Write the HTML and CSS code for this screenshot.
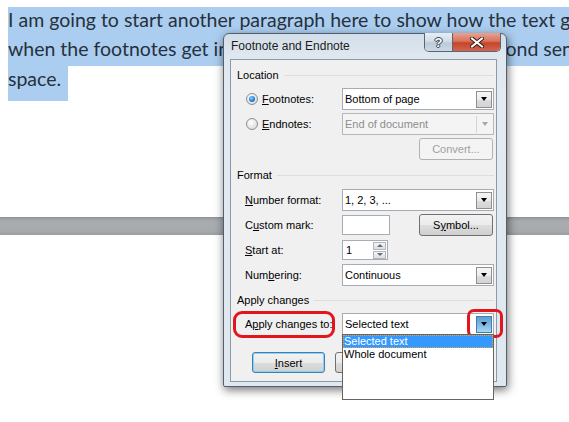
FILE: index.html
```html
<!DOCTYPE html>
<html>
<head>
<meta charset="utf-8">
<title>Footnote and Endnote</title>
<link rel="stylesheet" href="styles.css">
</head>
<body>
<div class="doc">
  <div class="line">I am going to start another paragraph here to show how the text goes</div>
  <div class="line">when the footnotes get in the way of the text. This is a second sentence to</div>
  <div class="line last">space.</div>
  <div class="page-break"></div>
</div>

<div class="dialog">
  <div class="titlebar">
    <div class="title">Footnote and Endnote</div>
    <div class="caption-btns">
      <div class="cap-btn help">?</div>
      <div class="cap-btn close">
        <svg width="14" height="11" viewBox="0 0 14 11"><path d="M2 1.5 L12 9.5 M12 1.5 L2 9.5" stroke="#3a1a14" stroke-width="4" stroke-linecap="square"/><path d="M2 1.5 L12 9.5 M12 1.5 L2 9.5" stroke="#ffffff" stroke-width="2" stroke-linecap="square"/></svg>
      </div>
    </div>
  </div>
  <div class="client">
    <div class="group-head">Location</div>
    <div class="row first">
      <div class="lbl radio-lbl"><span class="radio checked"></span><span><u>F</u>ootnotes:</span></div>
      <div class="combo"><span class="ctext">Bottom of page</span><span class="dd"><i class="tri"></i></span></div>
    </div>
    <div class="row">
      <div class="lbl radio-lbl"><span class="radio"></span><span><u>E</u>ndnotes:</span></div>
      <div class="combo disabled"><span class="ctext">End of document</span><span class="dd"><i class="tri"></i></span></div>
    </div>
    <div class="row">
      <div class="btn side disabled">Convert...</div>
    </div>

    <div class="group-head">Format</div>
    <div class="row first-f">
      <div class="lbl"><span><u>N</u>umber format:</span></div>
      <div class="combo"><span class="ctext">1, 2, 3, ...</span><span class="dd"><i class="tri"></i></span></div>
    </div>
    <div class="row">
      <div class="lbl"><span>C<u>u</u>stom mark:</span></div>
      <div class="textbox"></div>
      <div class="btn symbol">S<u>y</u>mbol...</div>
    </div>
    <div class="row">
      <div class="lbl"><span><u>S</u>tart at:</span></div>
      <div class="spin"><span class="ctext">1</span><span class="spin-btns"><span class="sb up"><i></i></span><span class="sb down"><i></i></span></span></div>
    </div>
    <div class="row">
      <div class="lbl"><span>Num<u>b</u>ering:</span></div>
      <div class="combo"><span class="ctext">Continuous</span><span class="dd"><i class="tri"></i></span></div>
    </div>

    <div class="group-head apply">Apply changes</div>
    <div class="row first-a">
      <div class="lbl"><span>A<u>p</u>ply changes to:</span></div>
      <div class="combo open"><span class="ctext">Selected text</span><span class="dd hot"><i class="tri"></i></span>
        <div class="list">
          <div class="item selected">Selected text</div>
          <div class="item">Whole document</div>
        </div>
      </div>
    </div>
    <div class="btn-row">
      <div class="btn default"><u>I</u>nsert</div>
      <div class="btn">Cancel</div>
    </div>
  </div>
</div>

<div class="mark mark-label"></div>
<div class="mark mark-arrow"></div>
</body>
</html>
```
FILE: styles.css
```css
html, body {
  margin: 0;
  padding: 0;
}
body {
  width: 569px;
  height: 422px;
  overflow: hidden;
  position: relative;
  background: #ffffff;
  font-family: Lato, "Liberation Sans", sans-serif;
}

/* document */
.doc {
  padding-top: 7px;
  padding-left: 8px;
}
.line {
  height: 29.3px;
  line-height: 25px;
  background: #abcdef;
  white-space: nowrap;
  overflow: hidden;
  font-size: 19.5px;
  color: #26313d;
}
.line.last {
  width: 60px;
  height: 35.4px;
}
.page-break {
  margin-top: 116px;
  margin-left: -8px;
  height: 18px;
  background: linear-gradient(#8c9094 0px, #9ea2a6 2px, #aaadb0 5px, #a7aaad 14px, #9a9ea1 18px);
}

/* dialog window */
.dialog {
  position: absolute;
  left: 223px;
  top: 33px;
  width: 284px;
  height: 354px;
  box-sizing: border-box;
  border: 1px solid #52606e;
  border-radius: 6px 6px 2px 2px;
  background: linear-gradient(#d3dee9 0px, #dfe7ef 22px, #e3eaf1 60px, #dfe7ef 100%);
  box-shadow: 1px 3px 10px rgba(0, 0, 0, 0.55);
  font-family: "Liberation Sans", Arial, sans-serif;
  font-size: 11px;
  color: #000;
}
.titlebar {
  height: 25px;
  display: flex;
  align-items: flex-start;
}
.title {
  padding-left: 7px;
  line-height: 24px;
  font-size: 12px;
  color: #1b1b1b;
}
.caption-btns {
  margin-left: auto;
  margin-right: 5px;
  margin-top: -1px;
  display: flex;
  border: 1px solid #5a6472;
  border-top: none;
  border-radius: 0 0 5px 5px;
  overflow: hidden;
}
.cap-btn {
  height: 18px;
  display: flex;
  align-items: center;
  justify-content: center;
}
.help {
  width: 27px;
  border-right: 1px solid #5a6472;
  background: linear-gradient(#e6edf4 0%, #d2dde8 45%, #bccbd9 55%, #cbd8e4 100%);
  color: #ffffff;
  font-weight: bold;
  font-size: 13px;
  text-shadow: 0 0 1px #2c3a48, 1px 0 0 #3a4856, -1px 0 0 #3a4856, 0 1px 0 #3a4856, 0 -1px 0 #3a4856;
}
.close {
  width: 47px;
  background: linear-gradient(#e8a293 0%, #d9735c 45%, #c4462b 55%, #d3664c 100%);
}

.client {
  margin-left: 6px;
  width: 267px;
  height: 323px;
  box-sizing: border-box;
  border: 1px solid #8a9aab;
  background: #f0f0f0;
}

.group-head {
  display: flex;
  align-items: center;
  height: 16px;
  margin-top: 7px;
  padding-left: 6px;
  padding-right: 2px;
}
.group-head::after {
  content: "";
  flex: 1;
  height: 1px;
  background: #d5dfe5;
  margin-left: 5px;
}
.group-head.apply {
  margin-top: 6px;
}

.row {
  display: flex;
  align-items: center;
  height: 22px;
  margin-top: 3px;
}
.row.first { margin-top: 5px; }
.row.first-f { margin-top: 6px; }
.row.first-a { margin-top: 5px; }

.lbl {
  width: 111px;
  box-sizing: border-box;
  padding-left: 14px;
  display: flex;
  align-items: center;
}
.radio-lbl {
  padding-left: 15px;
}
.radio {
  width: 12px;
  height: 12px;
  box-sizing: border-box;
  border-radius: 50%;
  border: 1px solid #8b8f94;
  background: radial-gradient(circle at 40% 35%, #ffffff 0%, #e8e8e8 50%, #cfd2d6 100%);
  margin-right: 4px;
  display: flex;
  align-items: center;
  justify-content: center;
}
.radio.checked::after {
  content: "";
  width: 6px;
  height: 6px;
  border-radius: 50%;
  background: radial-gradient(circle at 40% 35%, #8fd3ff 0%, #2f8ee0 45%, #14508f 100%);
}

/* combo box */
.combo {
  position: relative;
  width: 152px;
  height: 22px;
  box-sizing: border-box;
  border: 1px solid #a5acb5;
  background: #ffffff;
  display: flex;
  align-items: center;
}
.ctext {
  flex: 1;
  padding-left: 2px;
  white-space: nowrap;
}
.dd {
  width: 16px;
  height: 17px;
  box-sizing: border-box;
  margin-right: 1px;
  border: 1px solid #8f8f8f;
  background: linear-gradient(#f6f6f6 0%, #ececec 50%, #dcdcdc 51%, #d4d4d4 100%);
  display: flex;
  align-items: center;
  justify-content: center;
}
.tri {
  width: 0;
  height: 0;
  border-left: 3.5px solid transparent;
  border-right: 3.5px solid transparent;
  border-top: 4px solid #000;
}
.combo.disabled {
  background: #f4f4f4;
  border-color: #b5b8bc;
  color: #8d8d8d;
}
.combo.disabled .dd {
  border: none;
  border-left: 1px solid #d4d4d4;
  background: transparent;
}
.combo.disabled .tri {
  border-top-color: #a6a6a6;
}
.dd.hot {
  border-color: #3c7fb1;
  background: linear-gradient(#5f9fd2 0%, #7cb8e2 50%, #a9d6f2 100%);
}

.list {
  position: absolute;
  left: -1px;
  top: 100%;
  width: 152px;
  height: 66px;
  box-sizing: border-box;
  border: 1px solid #646464;
  background: #ffffff;
  z-index: 2;
}
.item {
  height: 13px;
  line-height: 13px;
  padding-left: 1px;
  white-space: nowrap;
}
.item.selected {
  background: #3399ff;
  color: #ffffff;
  outline: 1px dotted #e8a23c;
  outline-offset: -1px;
}

/* text box & spinner */
.textbox {
  width: 48px;
  height: 20px;
  box-sizing: border-box;
  border: 1px solid #a5acb5;
  background: #ffffff;
}
.spin {
  width: 46px;
  height: 20px;
  box-sizing: border-box;
  border: 1px solid #a5acb5;
  background: #ffffff;
  display: flex;
  align-items: center;
}
.spin .ctext {
  padding-left: 3px;
}
.spin-btns {
  display: flex;
  flex-direction: column;
  margin-right: 1px;
}
.sb {
  width: 13px;
  height: 8px;
  box-sizing: border-box;
  border: 1px solid #b3b6ba;
  background: linear-gradient(#f4f4f4, #dedede);
  display: flex;
  align-items: center;
  justify-content: center;
}
.sb.up { margin-bottom: 1px; }
.sb i {
  width: 0;
  height: 0;
  border-left: 3px solid transparent;
  border-right: 3px solid transparent;
}
.sb.up i { border-bottom: 3px solid #5a6f8c; }
.sb.down i { border-top: 3px solid #5a6f8c; }

/* buttons */
.btn {
  width: 74px;
  height: 22px;
  box-sizing: border-box;
  border: 1px solid #707070;
  border-radius: 3px;
  background: linear-gradient(#f2f2f2 0%, #ebebeb 50%, #dddddd 51%, #cfcfcf 100%);
  display: flex;
  align-items: center;
  justify-content: center;
  white-space: nowrap;
}
.btn.side {
  margin-left: 188px;
}
.btn.symbol {
  margin-left: 29px;
}
.btn.disabled {
  border-color: #adb2b5;
  background: #f4f4f4;
  color: #a0a0a0;
}
.btn-row {
  display: flex;
  margin-top: 17px;
  padding-left: 21px;
  gap: 10px;
}
.btn-row .btn {
  width: 73px;
  height: 21px;
}
.btn.default {
  border-color: #3c7fb1;
  box-shadow: inset 0 0 0 1px #8fd0f5;
}

/* red annotation marks */
.mark {
  position: absolute;
  box-sizing: border-box;
  border: 3px solid #e3161e;
  border-radius: 9px;
}
.mark-label {
  left: 233px;
  top: 311px;
  width: 102px;
  height: 27px;
}
.mark-arrow {
  left: 467px;
  top: 309px;
  width: 36px;
  height: 29px;
  border-radius: 7px;
}
```
